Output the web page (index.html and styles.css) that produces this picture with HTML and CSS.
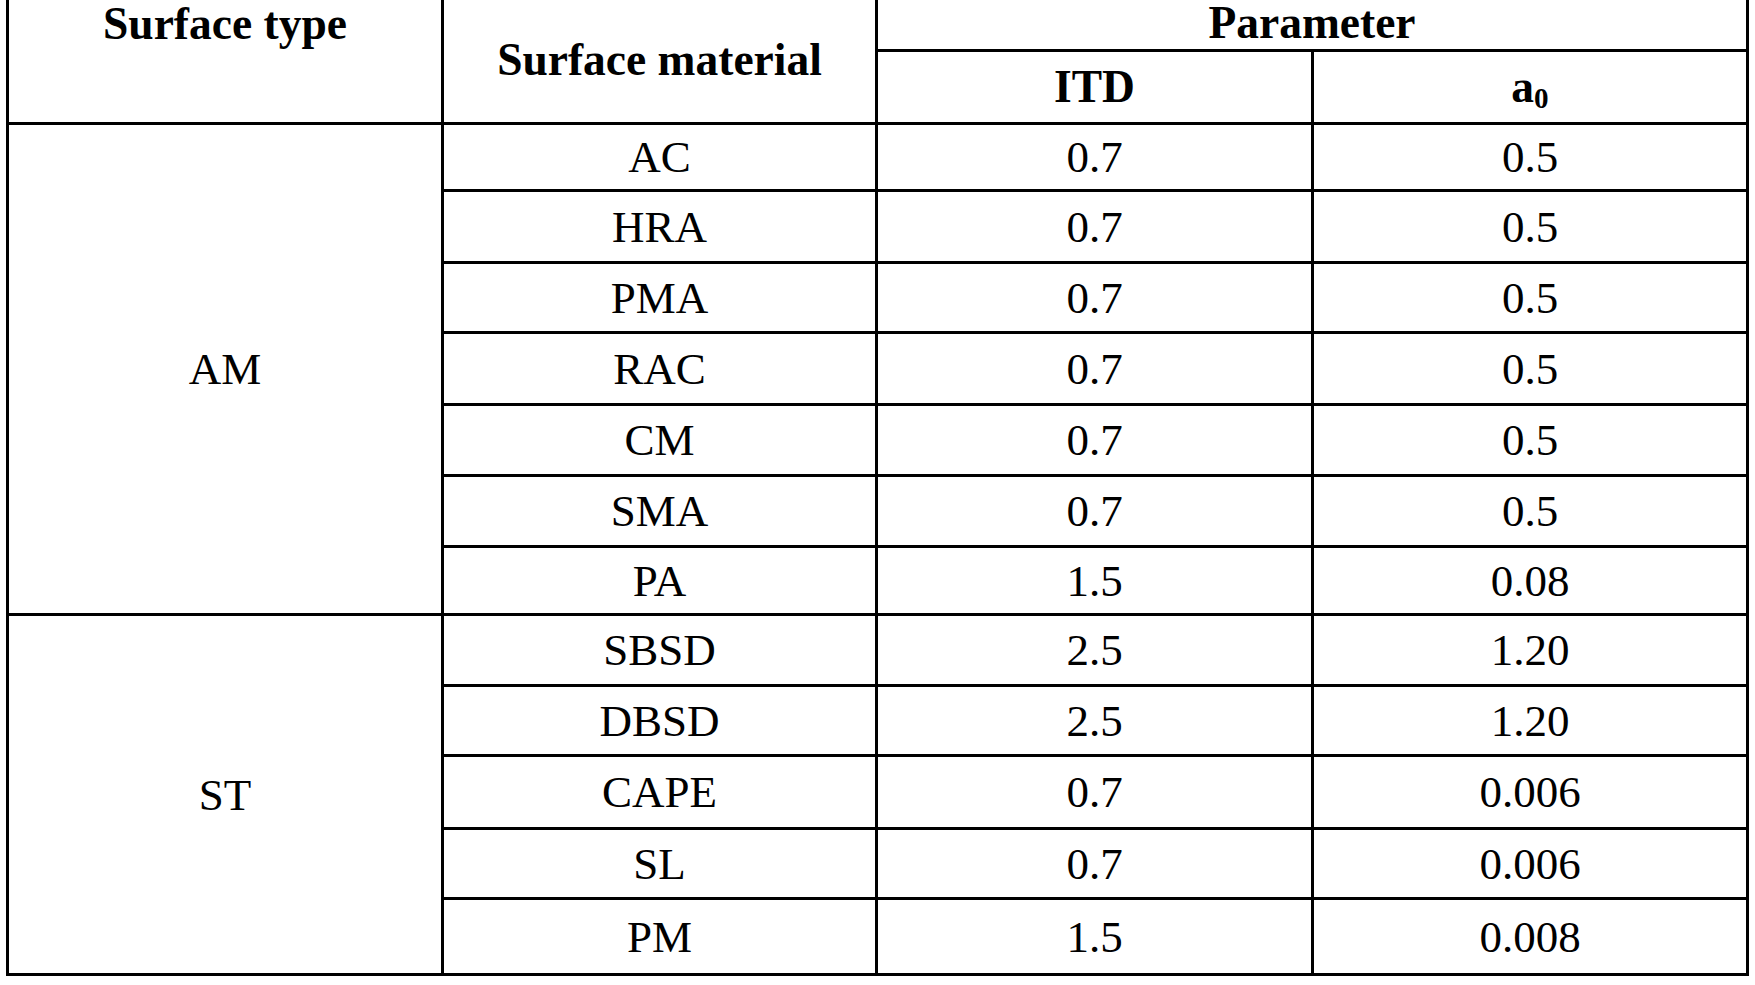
FILE: index.html
```html
<!DOCTYPE html>
<html lang="en">
<head>
<meta charset="utf-8">
<title>Surface parameters</title>
<link rel="stylesheet" href="styles.css">
</head>
<body>
<div class="sheet" role="table">
  <div class="cell head h-type" role="columnheader">Surface type</div>
  <div class="cell head h-mat" role="columnheader">Surface material</div>
  <div class="cell head h-param" role="columnheader">Parameter</div>
  <div class="cell head h-itd" role="columnheader">ITD</div>
  <div class="cell head h-a0" role="columnheader"><span class="sym">a<sub class="sub">0</sub></span></div>

  <div class="cell group g-am">AM</div>
  <div class="cell group g-st">ST</div>

  <div class="cell">AC</div><div class="cell">0.7</div><div class="cell">0.5</div>
  <div class="cell">HRA</div><div class="cell">0.7</div><div class="cell">0.5</div>
  <div class="cell">PMA</div><div class="cell">0.7</div><div class="cell">0.5</div>
  <div class="cell">RAC</div><div class="cell">0.7</div><div class="cell">0.5</div>
  <div class="cell">CM</div><div class="cell">0.7</div><div class="cell">0.5</div>
  <div class="cell">SMA</div><div class="cell">0.7</div><div class="cell">0.5</div>
  <div class="cell">PA</div><div class="cell">1.5</div><div class="cell">0.08</div>
  <div class="cell">SBSD</div><div class="cell">2.5</div><div class="cell">1.20</div>
  <div class="cell">DBSD</div><div class="cell">2.5</div><div class="cell">1.20</div>
  <div class="cell">CAPE</div><div class="cell">0.7</div><div class="cell">0.006</div>
  <div class="cell">SL</div><div class="cell">0.7</div><div class="cell">0.006</div>
  <div class="cell">PM</div><div class="cell">1.5</div><div class="cell">0.008</div>
</div>
</body>
</html>
```
FILE: styles.css
```css
html, body {
  margin: 0;
  padding: 0;
  background: #ffffff;
}

body {
  font-family: "Liberation Serif", "Times New Roman", serif;
  color: #000000;
  overflow: hidden;
}

.sheet {
  display: grid;
  grid-template-columns: 432px 431px 433px 432px;
  grid-template-rows: 52px 70px 64px 69px 67px 69px 68px 68px 65px 68px 67px 70px 67px 73px;
  gap: 3px;
  padding: 3px;
  background: #000000;
  width: max-content;
  margin: -6px 0 0 6px;
}

.cell {
  background: #ffffff;
  display: flex;
  align-items: center;
  justify-content: center;
  font-size: 45px;
  line-height: 52px;
}

.head {
  font-weight: bold;
  font-size: 45.5px;
}

.h-type {
  grid-column: 1;
  grid-row: 1 / 3;
  align-items: flex-start;
  padding-top: 1px;
}

.h-mat {
  grid-column: 2;
  grid-row: 1 / 3;
}

.h-param {
  grid-column: 3 / 5;
  grid-row: 1;
}

.h-itd {
  grid-column: 3;
  grid-row: 2;
}

.h-a0 {
  grid-column: 4;
  grid-row: 2;
}

.sym {
  display: inline-block;
}

.sub {
  font-size: 0.64em;
  line-height: 0;
  vertical-align: -0.2em;
}

.g-am {
  grid-column: 1;
  grid-row: 3 / 10;
}

.g-st {
  grid-column: 1;
  grid-row: 10 / 15;
}
```
